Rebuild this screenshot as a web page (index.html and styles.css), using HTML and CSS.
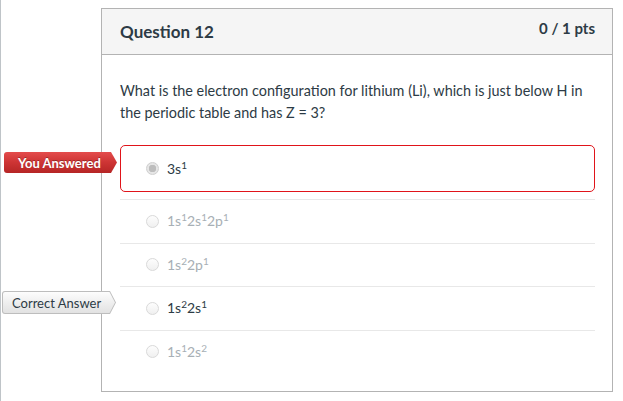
FILE: index.html
```html
<!DOCTYPE html>
<html lang="en">
<head>
<meta charset="utf-8">
<title>Question 12</title>
<link rel="stylesheet" href="styles.css">
</head>
<body>
<div class="page">
  <div class="card">
    <div class="card-header">
      <h2 class="title">Question 12</h2>
      <span class="pts">0 / 1 pts</span>
    </div>
    <div class="card-body">
      <p class="question">What is the electron configuration for lithium (Li), which is just below H in the periodic table and has Z = 3?</p>
      <div class="answers">
        <div class="answer answer--chosen">
          <span class="tag tag--wrong">You Answered</span>
          <span class="radio radio--checked"></span>
          <span class="answer-text">3s<sup>1</sup></span>
        </div>
        <div class="answer answer--dim">
          <span class="radio"></span>
          <span class="answer-text">1s<sup>1</sup>2s<sup>1</sup>2p<sup>1</sup></span>
        </div>
        <div class="answer answer--dim">
          <span class="radio"></span>
          <span class="answer-text">1s<sup>2</sup>2p<sup>1</sup></span>
        </div>
        <div class="answer">
          <span class="tag tag--correct"><span class="tag-inner">Correct Answer</span></span>
          <span class="radio"></span>
          <span class="answer-text">1s<sup>2</sup>2s<sup>1</sup></span>
        </div>
        <div class="answer answer--dim">
          <span class="radio"></span>
          <span class="answer-text">1s<sup>1</sup>2s<sup>2</sup></span>
        </div>
      </div>
    </div>
  </div>
</div>
</body>
</html>
```
FILE: styles.css
```css
* { box-sizing: border-box; }
html, body {
  margin: 0;
  padding: 0;
  background: #fff;
}
body {
  font-family: Lato, "Open Sans", "Liberation Sans", sans-serif;
  color: #2d3b45;
}
.page {
  min-height: 100vh;
  border-left: 1px solid #bfc4c8;
  padding: 8px 10px 0 100px;
}
.card {
  border: 1px solid #b3b3b3;
  background: #fff;
}
.card-header {
  display: flex;
  justify-content: space-between;
  align-items: flex-start;
  height: 46px;
  background: #f5f5f5;
  border-bottom: 1px solid #b3b3b3;
  padding: 0 17px 0 18px;
}
.title {
  margin: 13px 0 0;
  font-size: 17px;
  line-height: 20px;
  font-weight: 700;
}
.pts {
  margin-top: 9px;
  font-size: 15px;
  line-height: 20px;
  font-weight: 700;
}
.card-body {
  padding: 25px 17px 18px 18px;
}
.question {
  margin: 0 0 21px;
  font-size: 14.4px;
  line-height: 22px;
}
.answers {
  display: flex;
  flex-direction: column;
}
.answer {
  position: relative;
  display: flex;
  align-items: center;
  gap: 8px;
  height: 43.5px;
  padding-left: 26px;
  border-top: 1px solid #e8e8e8;
  font-size: 14px;
}
.answer--chosen {
  height: 47px;
  margin-bottom: 7px;
  padding-left: 25px;
  border: 1px solid #e0141a;
  border-radius: 5px;
}
.answer--dim .answer-text { color: #a7afb5; }
.answer-text {
  line-height: 18px;
}
.answer-text sup {
  font-size: 10px;
  line-height: 0;
  vertical-align: 5px;
}
.radio {
  flex: none;
  width: 13px;
  height: 13px;
  border-radius: 50%;
  border: 1px solid #d9d9d9;
  background: linear-gradient(#fdfdfd, #f0f0f0);
}
.radio--checked {
  border-color: #cfcfcf;
  background: radial-gradient(circle, #bdbdbd 0 3.5px, #e6e6e6 4px);
}
.tag {
  position: absolute;
  display: flex;
  align-items: center;
  white-space: nowrap;
  font-size: 13px;
  clip-path: polygon(0 0, calc(100% - 6px) 0, 100% 50%, calc(100% - 6px) 100%, 0 100%);
}
.tag--wrong {
  top: 6px;
  left: -117px;
  width: 113px;
  height: 21px;
  padding-left: 14px;
  border-radius: 3px 0 0 3px;
  background: linear-gradient(#e44c4c, #cd3434 50%, #b62626);
  color: #fff;
  font-weight: 700;
  text-shadow: 0 -1px 0 rgba(0, 0, 0, 0.3);
}
.tag--correct {
  top: 4px;
  left: -118px;
  width: 114px;
  height: 23px;
  padding: 1px;
  border-radius: 3px 0 0 3px;
  background: #bdbdbd;
}
.tag-inner {
  display: flex;
  align-items: center;
  width: 100%;
  height: 21px;
  padding-left: 9px;
  border-radius: 2px 0 0 2px;
  background: linear-gradient(#fdfdfd, #ececec 60%, #e2e2e2);
  color: #2d3b45;
  clip-path: polygon(0 0, calc(100% - 5.5px) 0, 100% 50%, calc(100% - 5.5px) 100%, 0 100%);
}
```
